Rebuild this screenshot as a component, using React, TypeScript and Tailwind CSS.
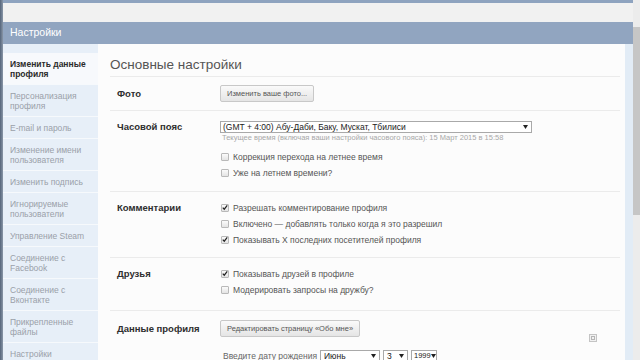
import React from "react";

const menu: { text: string; active?: boolean }[] = [
  { text: "Изменить данные профиля", active: true },
  { text: "Персонализация профиля" },
  { text: "E-mail и пароль" },
  { text: "Изменение имени пользователя" },
  { text: "Изменить подпись" },
  { text: "Игнорируемые пользователи" },
  { text: "Управление Steam" },
  { text: "Соединение с Facebook" },
  { text: "Соединение с Вконтакте" },
  { text: "Прикрепленные файлы" },
  { text: "Настройки" },
];

const Check = ({ checked, label }: { checked?: boolean; label: string }) => (
  <div className="h-[16px] flex items-center gap-[4px] pl-[1px]">
    <div className="w-[8px] h-[8px] border border-[#b9b9b9] bg-gradient-to-b from-[#fbfbfb] to-[#e4e4e4] rounded-[1px] flex items-center justify-center">
      {checked && (
        <svg width="7" height="7" viewBox="0 0 8 8" className="-mt-[1px]">
          <path d="M1 4.2 L3 6.3 L7 1.2" stroke="#222" strokeWidth="1.6" fill="none" />
        </svg>
      )}
    </div>
    <span className="text-[8.5px] text-[#555]">{label}</span>
  </div>
);

const Button = ({ children }: { children: React.ReactNode }) => (
  <div className="h-[17px] flex items-center px-[6px] border border-[#c8c8c8] rounded-[2px] bg-gradient-to-b from-[#fafafa] to-[#e5e5e5] text-[7.5px] text-[#555]">
    {children}
  </div>
);

const Arrow = () => (
  <svg width="5" height="4" viewBox="0 0 5 4" className="shrink-0">
    <path d="M0 0 L5 0 L2.5 4 Z" fill="#222" />
  </svg>
);

const Row = ({
  label,
  lead,
  className,
  children,
}: {
  label: string;
  lead: string;
  className: string;
  children: React.ReactNode;
}) => (
  <div className={`flex border-t border-[#ebebeb] pl-[7px] ${className}`}>
    <div className={`w-[103px] shrink-0 font-bold text-[9.5px] text-[#2e2e2e] ${lead}`}>{label}</div>
    <div className="flex-1 flex flex-col">{children}</div>
  </div>
);

export default function App() {
  return (
    <div className="w-[640px] h-[360px] overflow-hidden flex bg-[#f0f0f0] font-['Liberation_Sans',Arial,sans-serif]">
      <div className="w-[3px] bg-gradient-to-r from-[#55657a] to-[#8a97a8]" />

      <div className="flex-1 flex flex-col min-w-0">
        <div className="h-[3px] bg-[#8ea3bf]" />
        <div className="h-[19px] bg-[#f1f1f1]" />
        <div className="h-[22px] bg-[#91a5c0] flex items-center pl-[7px] text-white text-[10.5px]">
          Настройки
        </div>

        <div className="flex flex-1 min-h-0">
          {/* sidebar */}
          <div className="w-[95px] shrink-0 bg-[#e7eff8] pt-[9px]">
            {menu.map((m) => (
              <div
                key={m.text}
                className={`px-[7px] pt-[6px] pb-[5px] leading-[10px] text-[8.5px] border-b border-[#f6f9fc] ${
                  m.active ? "bg-[#f7f9fc] text-[#2a2a2a] font-bold" : "text-[#9aa0a8]"
                }`}
              >
                {m.text}
              </div>
            ))}
          </div>

          {/* content */}
          <div className="flex-1 bg-[#fcfcfc] pl-[12px] pr-[5px] pt-[13px]">
            <div className="text-[13.5px] leading-[16px] text-[#555] mb-[3px]">Основные настройки</div>

            <Row label="Фото" lead="leading-[17px]" className="pt-[8px] pb-[8px]">
              <div className="flex">
                <Button>Изменить ваше фото...</Button>
              </div>
            </Row>

            <Row label="Часовой пояс" lead="leading-[12px]" className="pt-[10px] pb-[10px]">
              <div className="w-[312px] h-[12px] border border-[#a9a9a9] bg-white flex items-center justify-between pl-[2px] pr-[3px] text-[8.5px] text-[#222]">
                <span>(GMT + 4:00) Абу-Даби, Баку, Мускат, Тбилиси</span>
                <Arrow />
              </div>
              <div className="h-[10px] leading-[10px] text-[7.5px] text-[#a8a8a8] pl-[2px]">
                Текущее время (включая ваши настройки часового пояса): 15 Март 2015 в 15:58
              </div>
              <div className="mt-[6px]">
                <Check label="Коррекция перехода на летнее время" />
                <Check label="Уже на летнем времени?" />
              </div>
            </Row>

            <Row label="Комментарии" lead="leading-[16px]" className="pt-[8px] pb-[9px]">
              <Check checked label="Разрешать комментирование профиля" />
              <Check label="Включено — добавлять только когда я это разрешил" />
              <Check checked label="Показывать X последних посетителей профиля" />
            </Row>

            <Row label="Друзья" lead="leading-[16px]" className="pt-[8px] pb-[12px]">
              <Check checked label="Показывать друзей в профиле" />
              <Check label="Модерировать запросы на дружбу?" />
            </Row>

            <Row label="Данные профиля" lead="leading-[17px]" className="pt-[9px]">
              <div className="flex items-start">
                <Button>Редактировать страницу «Обо мне»</Button>
                <div className="ml-auto mr-[23px] mt-[14px] w-[8px] h-[8px] border border-[#c4c4c4] bg-[#f1f1f1] flex items-center justify-center">
                  <div className="w-[4px] h-[4px] border border-[#b5b5b5]" />
                </div>
              </div>
              <div className="mt-[8px] flex items-center h-[12px] pl-[3px]">
                <span className="text-[8.5px] text-[#666] w-[97px]">Введите дату рождения</span>
                <div className="w-[60px] h-[12px] border border-[#a9a9a9] bg-white flex items-center justify-between px-[3px] text-[8.5px] text-[#222]">
                  <span>Июнь</span>
                  <Arrow />
                </div>
                <div className="ml-[3px] w-[25px] h-[12px] border border-[#a9a9a9] bg-white flex items-center justify-between px-[3px] text-[8.5px] text-[#222]">
                  <span>3</span>
                  <Arrow />
                </div>
                <div className="ml-[3px] w-[26px] h-[12px] border border-[#a9a9a9] bg-white flex items-center justify-between pl-[2px] pr-[2px] text-[7.5px] text-[#222]">
                  <span>1999</span>
                  <Arrow />
                </div>
              </div>
            </Row>
          </div>

          <div className="w-[8px] bg-[#e2ecf6]" />
        </div>
      </div>

      {/* scrollbar */}
      <div className="w-[7px] bg-[#ececec] flex flex-col pt-[27px]">
        <div className="h-[188px] bg-[#c6c6c6]" />
      </div>
    </div>
  );
}
